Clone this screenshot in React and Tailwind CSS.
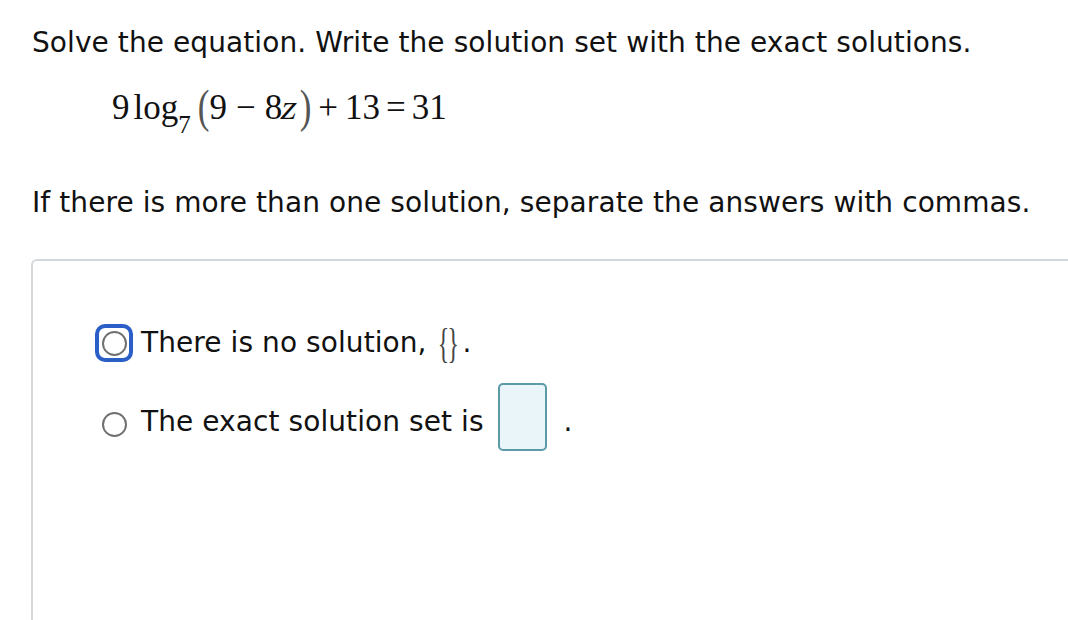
import React from 'react'

const sans = { fontFamily: '"DejaVu Sans", Verdana, sans-serif' }
const serif = { fontFamily: '"Liberation Serif", "Times New Roman", serif' }

function Radio({ focused }) {
  return (
    <div
      className={
        'w-[38px] h-[38px] shrink-0 flex items-center justify-center rounded-[10px] border-[4px] ' +
        (focused ? 'border-[#2b5fc7]' : 'border-transparent')
      }
    >
      <div className="w-[25px] h-[25px] rounded-full border-2 border-[#707070] bg-white" />
    </div>
  )
}

export default function App() {
  return (
    <div className="w-[1068px] h-[620px] overflow-hidden bg-white text-[#111] tracking-[0.08px]" style={sans}>
      <div className="pl-[32px] pt-[26px]">
        <p className="text-[28px] leading-[34px]">
          Solve the equation. Write the solution set with the exact solutions.
        </p>

        {/* equation */}
        <div className="mt-[28px] pl-[80px] h-[40px] flex items-baseline text-[35px] leading-[40px] tracking-normal" style={serif}>
          <span>9</span>
          <span className="ml-[4px]">log</span>
          <span className="text-[25px] relative top-[14px]">7</span>
          <span className="ml-[7px] inline-block text-[35px] text-[#555] scale-y-[1.3]">(</span>
          <span>9</span>
          <span className="mx-[9px]">−</span>
          <span>8</span>
          <span className="inline-block -skew-x-[14deg]">z</span>
          <span className="ml-[2px] inline-block text-[35px] text-[#555] scale-y-[1.3]">)</span>
          <span className="mx-[7px]">+</span>
          <span>13</span>
          <span className="mx-[6px]">=</span>
          <span>31</span>
        </div>

        <p className="mt-[58px] text-[28px] leading-[34px]">
          If there is more than one solution, separate the answers with commas.
        </p>
      </div>

      {/* answer panel */}
      <div className="ml-[31px] mt-[39px] w-[1100px] h-[400px] border-l-2 border-t-2 border-[#d3d9dc] rounded-tl-[6px] pt-[63px] pl-[62px]">
        <div className="flex items-center h-[38px]">
          <Radio focused />
          <span className="ml-[8px] text-[28px] leading-[38px]">There is no solution,</span>
          <span className="ml-[9px] inline-block text-[28px] leading-[38px] text-[#444] tracking-[-2px] scale-y-[1.5] scale-x-[0.85]" style={serif}>
            {'{}'}
          </span>
          <span className="ml-[4px] text-[28px] leading-[38px]">.</span>
        </div>

        <div className="mt-[21px] flex items-start">
          <div className="mt-[22px]">
            <Radio />
          </div>
          <span className="ml-[8px] mt-[20px] text-[28px] leading-[38px]">The exact solution set is</span>
          <div className="ml-[14px] w-[49px] h-[68px] rounded-[5px] border-2 border-[#5b9ba8] bg-[#eaf5fa]" />
          <span className="ml-[17px] mt-[20px] text-[28px] leading-[38px]">.</span>
        </div>
      </div>
    </div>
  )
}
